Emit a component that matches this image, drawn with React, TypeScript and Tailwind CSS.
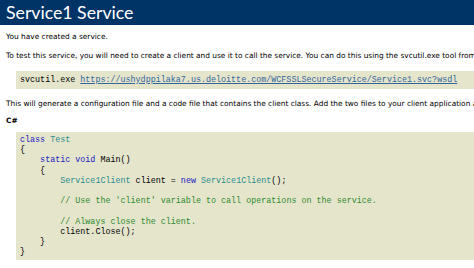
const kw = "text-[#2020c0]";
const ty = "text-[#2b8c8c]";
const cm = "text-[#2e8b2e]";

function Code() {
  return (
    <pre className="ml-[10px] mt-[6px] bg-[#e5e5cc] pl-[4px] pt-[3px] pb-[3px] font-['Liberation_Mono',monospace] text-[8.4px] leading-[10.2px] text-black">
      <span className={kw}>class</span> <span className={ty}>Test</span>
      {"\n{\n    "}
      <span className={kw}>static</span> <span className={kw}>void</span> Main()
      {"\n    {\n        "}
      <span className={ty}>Service1Client</span> client = <span className={kw}>new</span>{" "}
      <span className={ty}>Service1Client</span>();
      {"\n\n        "}
      <span className={cm}>// Use the 'client' variable to call operations on the service.</span>
      {"\n\n        "}
      <span className={cm}>// Always close the client.</span>
      {"\n        client.Close();\n    }\n}"}
    </pre>
  );
}

export default function App() {
  return (
    <div className="w-[474px] h-[268px] overflow-hidden bg-white">
      <div className="h-[25px] bg-[#003366] pl-[6px] text-white font-['Lato',sans-serif] text-[17.7px] leading-[25px]">
        Service1 Service
      </div>
      <div className="pl-[6px] whitespace-nowrap font-['DejaVu_Sans',sans-serif] text-[7.4px] leading-[10px] text-black">
        <p className="mt-[7px]">You have created a service.</p>
        <p className="mt-[9px]">
          To test this service, you will need to create a client and use it to call the service. You can do this using the svcutil.exe tool from the command line with the following syntax:
        </p>
        <div className="ml-[10px] mt-[10px] h-[18px] bg-[#e5e5cc] pl-[4px] flex items-center font-['Liberation_Mono',monospace] text-[8.4px]">
          <span>svcutil.exe&nbsp;</span>
          <a href="#" className="text-[#336699] underline">
            https://ushydppilaka7.us.deloitte.com/WCFSSLSecureService/Service1.svc?wsdl
          </a>
        </div>
        <p className="mt-[10px]">
          This will generate a configuration file and a code file that contains the client class. Add the two files to your client application and use the generated client class to call the Service.
        </p>
        <p className="mt-[7px] font-bold">C#</p>
        <Code />
      </div>
    </div>
  );
}
